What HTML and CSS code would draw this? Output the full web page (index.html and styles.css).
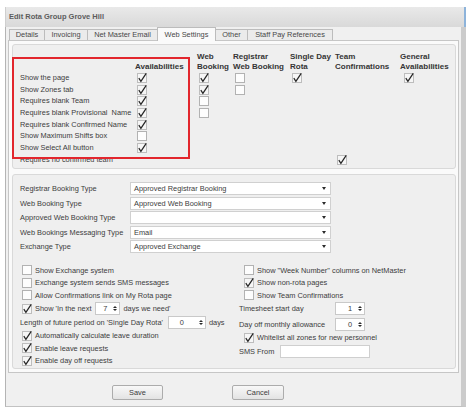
FILE: index.html
```html
<!DOCTYPE html>
<html>
<head>
<meta charset="utf-8">
<title>Edit Rota Group Grove Hill</title>
<link rel="stylesheet" href="styles.css">
</head>
<body>
<div class="window">
  <div class="titlebar">Edit Rota Group Grove Hill</div>
  <div class="body">
    <div class="tabs">
      <div class="tab t1">Details</div>
      <div class="tab t2">Invoicing</div>
      <div class="tab t3">Net Master Email</div>
      <div class="tab t4 active">Web Settings</div>
      <div class="tab t5">Other</div>
      <div class="tab t6">Staff Pay References</div>
    </div>
    <div class="panel">
      <div class="group g1">
        <div class="highlight"></div>
        <div class="matrix">
          <div></div>
          <div class="hd">Availabilities</div>
          <div class="hd">Web<br>Booking</div>
          <div class="hd">Registrar<br>Web Booking</div>
          <div class="hd">Single Day<br>Rota</div>
          <div class="hd">Team<br>Confirmations</div>
          <div class="hd">General<br>Availabilities</div>

          <div class="lbl">Show the page</div>
          <div class="c"><svg class="cb" viewBox="0 0 10 10"><rect x=".5" y=".5" width="9" height="9" class="bx"/><path d="M1.8 5.2 L3.9 8.3 L9.2 0.4" class="ck"/></svg></div>
          <div class="c"><svg class="cb" viewBox="0 0 10 10"><rect x=".5" y=".5" width="9" height="9" class="bx"/><path d="M1.8 5.2 L3.9 8.3 L9.2 0.4" class="ck"/></svg></div>
          <div class="c"><svg class="cb" viewBox="0 0 10 10"><rect x=".5" y=".5" width="9" height="9" class="bo"/></svg></div>
          <div class="c"><svg class="cb" viewBox="0 0 10 10"><rect x=".5" y=".5" width="9" height="9" class="bx"/><path d="M1.8 5.2 L3.9 8.3 L9.2 0.4" class="ck"/></svg></div>
          <div></div>
          <div class="c gen"><svg class="cb" viewBox="0 0 10 10"><rect x=".5" y=".5" width="9" height="9" class="bx"/><path d="M1.8 5.2 L3.9 8.3 L9.2 0.4" class="ck"/></svg></div>

          <div class="lbl">Show Zones tab</div>
          <div class="c"><svg class="cb" viewBox="0 0 10 10"><rect x=".5" y=".5" width="9" height="9" class="bx"/><path d="M1.8 5.2 L3.9 8.3 L9.2 0.4" class="ck"/></svg></div>
          <div class="c"><svg class="cb" viewBox="0 0 10 10"><rect x=".5" y=".5" width="9" height="9" class="bx"/><path d="M1.8 5.2 L3.9 8.3 L9.2 0.4" class="ck"/></svg></div>
          <div class="c"><svg class="cb" viewBox="0 0 10 10"><rect x=".5" y=".5" width="9" height="9" class="bo"/></svg></div>
          <div></div><div></div><div></div>

          <div class="lbl">Requires blank Team</div>
          <div class="c"><svg class="cb" viewBox="0 0 10 10"><rect x=".5" y=".5" width="9" height="9" class="bx"/><path d="M1.8 5.2 L3.9 8.3 L9.2 0.4" class="ck"/></svg></div>
          <div class="c"><svg class="cb" viewBox="0 0 10 10"><rect x=".5" y=".5" width="9" height="9" class="bo"/></svg></div>
          <div></div><div></div><div></div><div></div>

          <div class="lbl">Requires blank Provisional&nbsp; Name</div>
          <div class="c"><svg class="cb" viewBox="0 0 10 10"><rect x=".5" y=".5" width="9" height="9" class="bx"/><path d="M1.8 5.2 L3.9 8.3 L9.2 0.4" class="ck"/></svg></div>
          <div class="c"><svg class="cb" viewBox="0 0 10 10"><rect x=".5" y=".5" width="9" height="9" class="bo"/></svg></div>
          <div></div><div></div><div></div><div></div>

          <div class="lbl">Requires blank Confirmed Name</div>
          <div class="c"><svg class="cb" viewBox="0 0 10 10"><rect x=".5" y=".5" width="9" height="9" class="bx"/><path d="M1.8 5.2 L3.9 8.3 L9.2 0.4" class="ck"/></svg></div>
          <div></div><div></div><div></div><div></div><div></div>

          <div class="lbl">Show Maximum Shifts box</div>
          <div class="c"><svg class="cb" viewBox="0 0 10 10"><rect x=".5" y=".5" width="9" height="9" class="bo"/></svg></div>
          <div></div><div></div><div></div><div></div><div></div>

          <div class="lbl">Show Select All button</div>
          <div class="c"><svg class="cb" viewBox="0 0 10 10"><rect x=".5" y=".5" width="9" height="9" class="bx"/><path d="M1.8 5.2 L3.9 8.3 L9.2 0.4" class="ck"/></svg></div>
          <div></div><div></div><div></div><div></div><div></div>

          <div class="lbl">Requires no confirmed team</div>
          <div></div><div></div><div></div><div></div>
          <div class="c"><svg class="cb" viewBox="0 0 10 10"><rect x=".5" y=".5" width="9" height="9" class="bx"/><path d="M1.8 5.2 L3.9 8.3 L9.2 0.4" class="ck"/></svg></div>
          <div></div>
        </div>
      </div>

      <div class="group g2">
        <div class="selects">
          <div class="sl">Registrar Booking Type</div>
          <div class="dd"><span class="v">Approved Registrar Booking</span><span class="arrow"></span></div>
          <div class="sl">Web Booking Type</div>
          <div class="dd"><span class="v">Approved Web Booking</span><span class="arrow"></span></div>
          <div class="sl">Approved Web Booking Type</div>
          <div class="dd"><span class="v"></span><span class="arrow"></span></div>
          <div class="sl">Web Bookings Messaging Type</div>
          <div class="dd"><span class="v">Email</span><span class="arrow"></span></div>
          <div class="sl">Exchange Type</div>
          <div class="dd"><span class="v">Approved Exchange</span><span class="arrow"></span></div>
        </div>

        <div class="lower">
          <div class="col left">
            <div class="row cbr"><svg class="cb" viewBox="0 0 10 10"><rect x=".5" y=".5" width="9" height="9" class="bo"/></svg><span>Show Exchange system</span></div>
            <div class="row cbr"><svg class="cb" viewBox="0 0 10 10"><rect x=".5" y=".5" width="9" height="9" class="bo"/></svg><span>Exchange system sends SMS messages</span></div>
            <div class="row cbr"><svg class="cb" viewBox="0 0 10 10"><rect x=".5" y=".5" width="9" height="9" class="bo"/></svg><span>Allow Confirmations link on My Rota page</span></div>
            <div class="row cbr sp"><svg class="cb" viewBox="0 0 10 10"><rect x=".5" y=".5" width="9" height="9" class="bx"/><path d="M1.8 5.2 L3.9 8.3 L9.2 0.4" class="ck"/></svg><span>Show 'In the next</span>
              <div class="spin s7"><span class="num">7</span><span class="arr"><i class="up"></i><i class="dn"></i></span></div>
              <span>days we need'</span></div>
            <div class="row sp"><span>Length of future period on 'Single Day Rota'</span>
              <div class="spin s0"><span class="num">0</span><span class="arr"><i class="up"></i><i class="dn"></i></span></div>
              <span>days</span></div>
            <div class="row cbr"><svg class="cb" viewBox="0 0 10 10"><rect x=".5" y=".5" width="9" height="9" class="bx"/><path d="M1.8 5.2 L3.9 8.3 L9.2 0.4" class="ck"/></svg><span>Automatically calculate leave duration</span></div>
            <div class="row cbr"><svg class="cb" viewBox="0 0 10 10"><rect x=".5" y=".5" width="9" height="9" class="bx"/><path d="M1.8 5.2 L3.9 8.3 L9.2 0.4" class="ck"/></svg><span>Enable leave requests</span></div>
            <div class="row cbr"><svg class="cb" viewBox="0 0 10 10"><rect x=".5" y=".5" width="9" height="9" class="bx"/><path d="M1.8 5.2 L3.9 8.3 L9.2 0.4" class="ck"/></svg><span>Enable day off requests</span></div>
          </div>
          <div class="col right">
            <div class="row cbr"><svg class="cb" viewBox="0 0 10 10"><rect x=".5" y=".5" width="9" height="9" class="bo"/></svg><span>Show "Week Number" columns on NetMaster</span></div>
            <div class="row cbr"><svg class="cb" viewBox="0 0 10 10"><rect x=".5" y=".5" width="9" height="9" class="bx"/><path d="M1.8 5.2 L3.9 8.3 L9.2 0.4" class="ck"/></svg><span>Show non-rota pages</span></div>
            <div class="row cbr"><svg class="cb" viewBox="0 0 10 10"><rect x=".5" y=".5" width="9" height="9" class="bo"/></svg><span>Show Team Confirmations</span></div>
            <div class="row sp"><span class="rl">Timesheet start day</span>
              <div class="spin sr"><span class="num">1</span><span class="arr"><i class="up"></i><i class="dn"></i></span></div></div>
            <div class="row sp sp2"><span class="rl">Day off monthly allowance</span>
              <div class="spin sr"><span class="num">0</span><span class="arr"><i class="up"></i><i class="dn"></i></span></div></div>
            <div class="row cbr"><svg class="cb" viewBox="0 0 10 10"><rect x=".5" y=".5" width="9" height="9" class="bx"/><path d="M1.8 5.2 L3.9 8.3 L9.2 0.4" class="ck"/></svg><span>Whitelist all zones for new personnel</span></div>
            <div class="row sms"><span class="smsl">SMS From</span><div class="txt"></div></div>
          </div>
        </div>
      </div>
    </div>
    <div class="buttons">
      <div class="btn save">Save</div>
      <div class="btn cancel">Cancel</div>
    </div>
  </div>
</div>
</body>
</html>
```

FILE: styles.css
```css
* { box-sizing: border-box; }
html, body { margin: 0; padding: 0; background: #ffffff; }
body {
  font-family: "Liberation Sans", Arial, sans-serif;
  font-size: 7.4px;
  color: #3c3c3c;
}

.window { margin: 7px 0 0 5px; width: 461px; }

.titlebar {
  height: 20px;
  line-height: 20px;
  padding-left: 3px;
  font-weight: bold;
  font-size: 7.5px;
  color: #5c5c5c;
  background: linear-gradient(#e9e9e9, #d9d9d9);
  border-left: 1px solid #cfcfcf;
  border-right: 2px solid #8db3da;
}

.body {
  height: 380px;
  background: #f0f0f0;
  border-left: 1px solid #b4b4b4;
  border-right: 5px solid #cbcbcb;
  border-bottom: 1px solid #c2c2c2;
  padding: 0 2px;
}

.tabs { display: flex; align-items: flex-end; height: 13px; margin-left: 1px; }
.tab {
  height: 11px;
  line-height: 10px;
  border: 1px solid #bcbcbc;
  border-bottom: none;
  margin-right: -1px;
  background: #ebebeb;
  color: #474747;
  text-align: center;
  white-space: nowrap;
}
.tab.active {
  height: 14px;
  line-height: 13px;
  margin-bottom: -1px;
  background: #fafafa;
  position: relative;
  z-index: 1;
}
.t1 { width: 36px; }
.t2 { width: 44px; }
.t3 { width: 71px; }
.t4 { width: 59px; }
.t5 { width: 33px; }
.t6 { width: 86px; }

.panel {
  height: 333px;
  border: 1px solid #c6c6c6;
  background: #fafafa;
  padding: 3px 2px 3px 3px;
  display: flex;
  flex-direction: column;
  gap: 5px;
}

.group {
  background: #efefef;
  border: 1px solid #d9d9d9;
  border-radius: 3px;
  padding: 7px 0 0 7px;
}
.g1 { height: 125px; position: relative; }
.g2 { height: 195px; }

.highlight {
  position: absolute;
  left: -1px;
  top: 12px;
  width: 178px;
  height: 102px;
  border: 2px solid #e2262d;
  pointer-events: none;
}

.matrix {
  display: grid;
  grid-template-columns: 115px 62px 36px 57px 45px 65px 1fr;
  grid-template-rows: 20px repeat(8, 11.7px);
}
.hd {
  align-self: end;
  font-weight: bold;
  font-size: 8px;
  line-height: 10px;
  color: #353535;
  white-space: nowrap;
}
.lbl { line-height: 11.7px; white-space: nowrap; }
.c { display: flex; align-items: center; padding-left: 2px; }
.c.gen { padding-left: 4px; }

.cb { width: 10px; height: 10px; display: block; flex: none; overflow: visible; }
.bx { fill: #f6f6f6; stroke: #bdbdbd; stroke-width: 1; }
.bo { fill: #fdfdfd; stroke: #b2b2b2; stroke-width: 1; }
.ck { fill: none; stroke: #262626; stroke-width: 1.25; stroke-linejoin: miter; }

.selects {
  display: grid;
  grid-template-columns: 110px 201px;
  grid-auto-rows: 13px;
  row-gap: 1.5px;
}
.sl { line-height: 13px; white-space: nowrap; }
.dd {
  background: #ffffff;
  border: 1px solid #d0d0d0;
  display: flex;
  align-items: center;
  padding: 0 4px 0 3px;
}
.dd .v { flex: 1; }
.arrow {
  width: 0; height: 0;
  border-left: 2.5px solid transparent;
  border-right: 2.5px solid transparent;
  border-top: 3px solid #2a2a2a;
}

.lower {
  display: grid;
  grid-template-columns: 219px 1fr;
  margin-top: 11px;
}
.col { display: flex; flex-direction: column; }
.row {
  height: 12.5px;
  display: flex;
  align-items: center;
  gap: 3px;
  white-space: nowrap;
}
.left .cbr { padding-left: 2px; }
.right .cbr { padding-left: 5px; }
.row.sp { height: 14px; }
.row.sp2 { margin-top: 2px; }
.row.sms { height: 15px; }

.spin {
  height: 13px;
  background: #ffffff;
  border: 1px solid #c9c9c9;
  display: flex;
  align-items: center;
  padding-right: 2px;
}
.spin .num { flex: 1; text-align: right; }
.s7 { width: 25px; margin-left: 1px; }
.s7 .num { padding-right: 6px; }
.s0 { width: 38px; margin-left: 2px; }
.s0 .num { padding-right: 15px; }
.sr { width: 30px; }
.sr .num { padding-right: 6px; }
.arr { display: flex; flex-direction: column; gap: 1.5px; }
.arr i { display: block; width: 0; height: 0; border-left: 2.5px solid transparent; border-right: 2.5px solid transparent; }
.arr .up { border-bottom: 2.5px solid #2a2a2a; }
.arr .dn { border-top: 2.5px solid #2a2a2a; }

.rl { width: 93px; }
.smsl { width: 38px; }
.txt { width: 90px; height: 13px; background: #ffffff; border: 1px solid #cfcfcf; }

.buttons {
  display: flex;
  gap: 69px;
  padding-left: 104px;
  margin-top: 12px;
}
.btn {
  height: 15px;
  border: 1px solid #acacac;
  border-radius: 2px;
  background: linear-gradient(#f8f8f8, #e3e3e3);
  display: flex;
  align-items: center;
  justify-content: center;
  color: #3a3a3a;
}
.save { width: 51px; }
.cancel { width: 52px; }
```
